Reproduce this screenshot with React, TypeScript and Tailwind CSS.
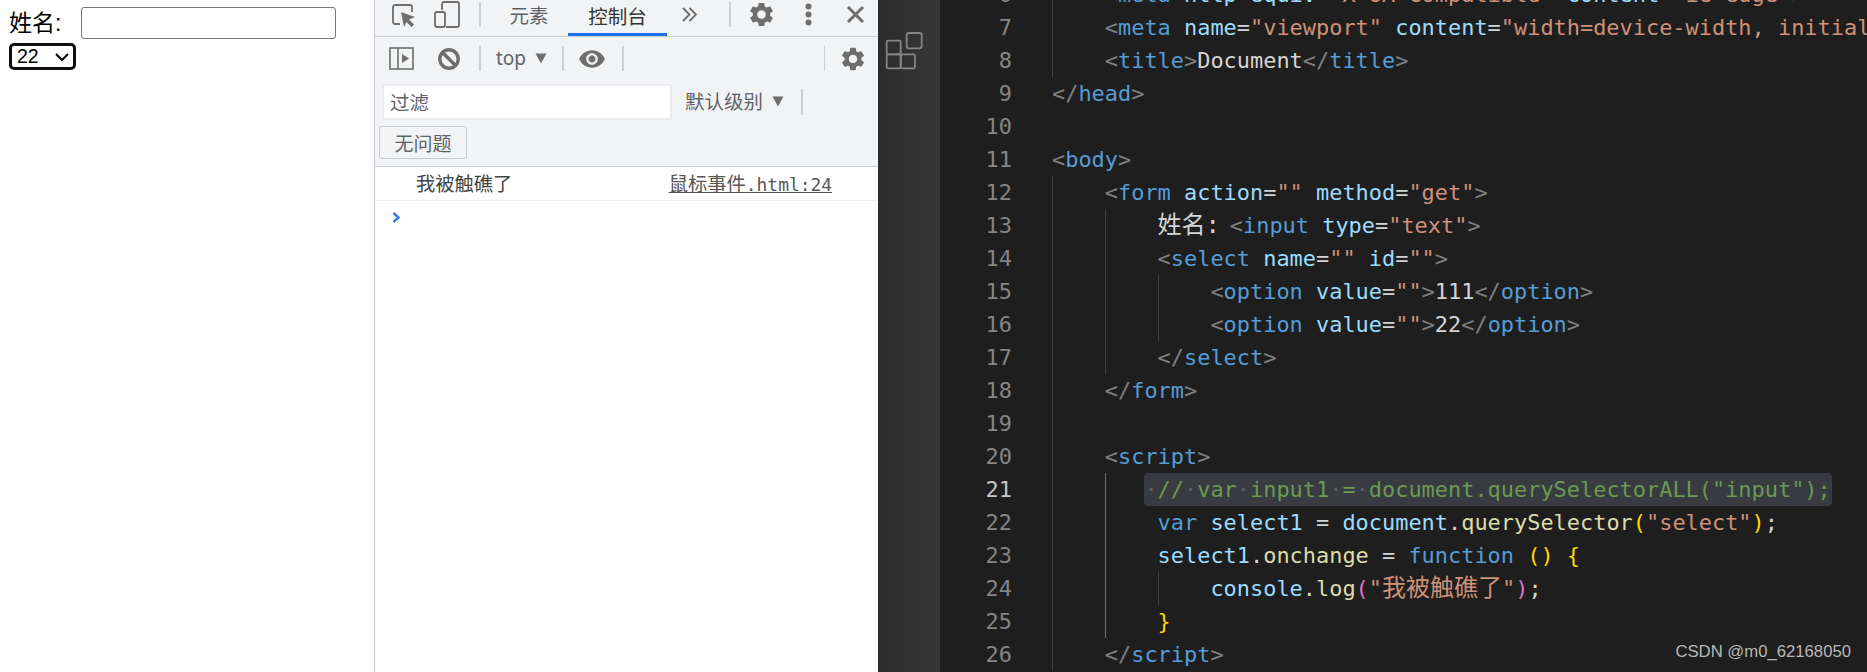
import React from "react";
import { MdSettings, MdVisibility } from "react-icons/md";

const UI = "font-['Noto_Sans','Noto_Sans_CJK_SC',sans-serif]";
const MONO = "font-['DejaVu_Sans_Mono','Noto_Sans_CJK_SC',monospace]";

// token colours
const P = "text-[#808080]";
const T = "text-[#569cd6]";
const A = "text-[#9cdcfe]";
const S = "text-[#ce9178]";
const W = "text-[#d4d4d4]";
const F = "text-[#dcdcaa]";
const G = "text-[#ffd700]";
const M = "text-[#da70d6]";
const C = "text-[#6a9955]";
const D = "text-[#5c6066]";

type Tok = [string, string];
type Row = { n: number; indent: number; toks?: Tok[]; hl?: boolean };

const open = (tag: string): Tok[] => [[P, "<"], [T, tag]];
const close = (tag: string): Tok[] => [[P, "</"], [T, tag], [P, ">"]];
const attr = (name: string, val: string): Tok[] => [[W, " "], [A, name], [W, "="], [S, `"${val}"`]];

const rows: Row[] = [
  { n: 6, indent: 1, toks: [...open("meta"), ...attr("http-equiv", "X-UA-Compatible"), ...attr("content", "ie=edge"), [P, ">"]] },
  { n: 7, indent: 1, toks: [...open("meta"), ...attr("name", "viewport"), ...attr("content", "width=device-width, initial-scale=1.0"), [P, ">"]] },
  { n: 8, indent: 1, toks: [...open("title"), [P, ">"], [W, "Document"], ...close("title")] },
  { n: 9, indent: 0, toks: close("head") },
  { n: 10, indent: 0 },
  { n: 11, indent: 0, toks: [...open("body"), [P, ">"]] },
  { n: 12, indent: 1, toks: [...open("form"), ...attr("action", ""), ...attr("method", "get"), [P, ">"]] },
  { n: 13, indent: 2, toks: [["cjk", "姓名:"], [W, " "], ...open("input"), ...attr("type", "text"), [P, ">"]] },
  { n: 14, indent: 2, toks: [...open("select"), ...attr("name", ""), ...attr("id", ""), [P, ">"]] },
  { n: 15, indent: 3, toks: [...open("option"), ...attr("value", ""), [P, ">"], [W, "111"], ...close("option")] },
  { n: 16, indent: 3, toks: [...open("option"), ...attr("value", ""), [P, ">"], [W, "22"], ...close("option")] },
  { n: 17, indent: 2, toks: close("select") },
  { n: 18, indent: 1, toks: close("form") },
  { n: 19, indent: 1 },
  { n: 20, indent: 1, toks: [...open("script"), [P, ">"]] },
  {
    n: 21,
    indent: 2,
    hl: true,
    toks: [
      [D, "·"], [C, "//"], [D, "·"], [C, "var"], [D, "·"], [C, "input1"], [D, "·"], [C, "="], [D, "·"],
      [C, 'document.querySelectorALL("input");'],
    ],
  },
  {
    n: 22,
    indent: 2,
    toks: [
      [T, "var"], [W, " "], [A, "select1"], [W, " = "], [A, "document"], [W, "."], [F, "querySelector"],
      [G, "("], [S, '"select"'], [G, ")"], [W, ";"],
    ],
  },
  {
    n: 23,
    indent: 2,
    toks: [[A, "select1"], [W, "."], [F, "onchange"], [W, " = "], [T, "function"], [W, " "], [G, "()"], [W, " "], [G, "{"]],
  },
  {
    n: 24,
    indent: 3,
    toks: [
      [A, "console"], [W, "."], [F, "log"], [M, "("], [S, '"'], [S, "我被触礁了"], [S, '"'], [M, ")"], [W, ";"],
    ],
  },
  { n: 25, indent: 2, toks: [[G, "}"]] },
  { n: 26, indent: 1, toks: close("script") },
];

const hasCjk = (s: string) => /[\u4e00-\u9fff]/.test(s);

function CodeRow({ row }: { row: Row }) {
  return (
    <div className="flex h-[33px] items-center leading-[33px] whitespace-pre">
      <div className={`w-[72px] shrink-0 text-right ${row.n === 21 ? "text-[#c6c6c6]" : "text-[#858585]"}`}>{row.n}</div>
      <div className="w-[40px] shrink-0" />
      {Array.from({ length: row.indent }).map((_, i) => (
        <div
          key={i}
          className={`h-full shrink-0 border-l ${row.hl && i === 1 ? "w-[39.6px]" : "w-[52.8px]"} ${
            row.n >= 21 && row.n <= 25 && i === 1 ? "border-[#707070]" : "border-[#404040]"
          }`}
        />
      ))}
      <div className={row.hl ? "flex h-full items-center rounded-[4px] bg-[#383b3f] pr-px" : "flex h-full items-center"}>
        {row.toks?.map(([cls, text], i) =>
          cls === "cjk" ? (
            <span key={i} className={`${W} inline-block w-[59px] text-[24px]`}>
              {text}
            </span>
          ) : (
            <span key={i} className={`${cls} ${hasCjk(text) ? "text-[24px]" : ""}`}>
              {text}
            </span>
          ),
        )}
      </div>
    </div>
  );
}

const Divider = ({ className = "" }: { className?: string }) => (
  <div className={`w-[2px] shrink-0 bg-[#cdd0d4] ${className}`} />
);

const Caret = ({ className = "" }: { className?: string }) => (
  <svg width="12" height="11" viewBox="0 0 12 11" className={`shrink-0 ${className}`}>
    <path d="M0.5 0.5h11L6 10.5z" fill="#6e6e6e" />
  </svg>
);

function DevTools() {
  return (
    <div className={`flex w-[503px] shrink-0 flex-col bg-white ${UI}`}>
      <div className="flex h-[37px] items-stretch border-b border-[#cacdd1] bg-[#f1f3f4]">
        <svg width="24" height="24" viewBox="0 0 24 24" fill="none" className="mt-[3px] ml-[16px] shrink-0">
          <path d="M9 21H4a2 2 0 0 1-2-2V4a2 2 0 0 1 2-2h15a2 2 0 0 1 2 2v5" stroke="#6e6e6e" strokeWidth="1.8" />
          <path d="M10 9l14 5-6 2.5 5 5-2.5 2.5-5-5L13 24z" fill="#6e6e6e" />
        </svg>
        <svg width="26" height="27" viewBox="0 0 26 27" fill="none" className="mt-px ml-[19px] shrink-0">
          <path d="M8 9V3a2 2 0 0 1 2-2h13a2 2 0 0 1 2 2v21a2 2 0 0 1-2 2H12" stroke="#6e6e6e" strokeWidth="1.8" />
          <rect x="1" y="11" width="10" height="15" rx="2" stroke="#6e6e6e" strokeWidth="1.8" />
        </svg>
        <Divider className="mt-[2px] ml-[19px] h-[25px]" />
        <div className="flex w-[87px] items-center justify-center pb-[5px] pl-[9px] text-[19.5px] text-[#5f6368]">元素</div>
        <div className="flex w-[99px] items-center justify-center border-b-[3px] border-[#1a73e8] text-[19.5px] text-[#333333]">控制台</div>
        <svg width="17" height="15" viewBox="0 0 17 15" fill="none" className="mt-[7px] ml-[14px] shrink-0">
          <path d="M2 1l6.5 6.5L2 14M8.5 1L15 7.5 8.5 14" stroke="#6e6e6e" strokeWidth="1.8" />
        </svg>
        <Divider className="mt-[2px] ml-[31px] h-[25px]" />
        <MdSettings className="ml-[16px] shrink-0 text-[#6e6e6e]" size={29} />
        <svg width="29" height="29" viewBox="0 0 29 29" className="ml-[18px] shrink-0">
          <circle cx="14.5" cy="6.5" r="3" fill="#6e6e6e" />
          <circle cx="14.5" cy="14.5" r="3" fill="#6e6e6e" />
          <circle cx="14.5" cy="22.5" r="3" fill="#6e6e6e" />
        </svg>
        <svg width="29" height="29" viewBox="0 0 29 29" fill="none" className="ml-[18px] shrink-0">
          <path d="M7 7l15 15M22 7L7 22" stroke="#6e6e6e" strokeWidth="3" />
        </svg>
      </div>
      <div className="flex h-[37px] items-center bg-[#f1f3f4] pt-[6px]">
        <svg width="25" height="23" viewBox="0 0 25 23" fill="none" className="ml-[14px] shrink-0">
          <rect x="1" y="1" width="23" height="21" stroke="#6e6e6e" strokeWidth="1.6" />
          <path d="M9 1v21" stroke="#6e6e6e" strokeWidth="1.6" />
          <path d="M13 7l7 4.5-7 4.5z" fill="#6e6e6e" />
        </svg>
        <svg width="24" height="24" viewBox="0 0 24 24" fill="none" className="ml-[23px] shrink-0">
          <circle cx="12" cy="12" r="9.2" stroke="#6e6e6e" strokeWidth="3.4" />
          <path d="M5.5 5.5l13 13" stroke="#6e6e6e" strokeWidth="3.4" />
        </svg>
        <Divider className="ml-[18px] h-[25px]" />
        <span className="ml-[15px] text-[19px] text-[#5f6368]">top</span>
        <Caret className="ml-[9px]" />
        <Divider className="ml-[15px] h-[25px]" />
        <MdVisibility className="ml-[14px] shrink-0 text-[#6e6e6e]" size={28} />
        <Divider className="ml-[16px] h-[25px]" />
        <Divider className="ml-[200px] h-[25px] w-px" />
        <MdSettings className="ml-[14px] shrink-0 text-[#6e6e6e]" size={28} />
      </div>
      <div className="flex h-[52px] items-center bg-[#f1f3f4] pt-[3px]">
        <div className="ml-[7px] flex h-[36px] w-[290px] items-center border-2 border-[#e9ebee] bg-white pt-[3px] pl-[6px] text-[19.5px] text-[#5f6368]">过滤</div>
        <span className="ml-[13px] text-[19.5px] text-[#5f6368]">默认级别</span>
        <Caret className="ml-[9px]" />
        <Divider className="ml-[17px] h-[26px]" />
      </div>
      <div className="flex h-[41px] items-start border-b border-[#cacdd1] bg-[#f1f3f4] pl-[4px]">
        <div className="flex h-[33px] w-[88px] items-center justify-center rounded-[3px] border border-[#c8cbcf] pt-[3px] text-[19px] text-[#5f6368]">无问题</div>
      </div>
      <div className="flex h-[34px] items-center justify-between border-b border-[#f0f0f0] pt-[2px] pr-[46px] pl-[41px] text-[19.3px] text-[#444444]">
        <span>我被触礁了</span>
        <span className="text-[#555555] underline">
          鼠标事件<span className="font-['DejaVu_Sans_Mono',monospace] text-[17.9px]">.html:24</span>
        </span>
      </div>
      <svg width="9" height="11" viewBox="0 0 9 11" fill="none" className="mt-[11px] ml-[17px]">
        <path d="M1.5 1l5 4.5-5 4.5" stroke="#2f7bf0" strokeWidth="2.4" />
      </svg>
    </div>
  );
}

export default function App() {
  return (
    <div className="relative flex h-[672px] w-[1867px] overflow-hidden bg-white">
      <form className="flex w-[375px] shrink-0 flex-col items-start border-r border-[#c8cbcf] pl-[9px] font-['Liberation_Sans','Noto_Sans_CJK_SC',sans-serif] text-black">
        <div className="mt-[7px] flex h-[32px] items-center">
          <span className="w-[72px] text-[23px]">姓名:</span>
          <input type="text" className="h-[32px] w-[255px] rounded-[3px] border border-[#767676] bg-white" />
        </div>
        <div className="relative mt-[4px]">
          <select
            defaultValue="22"
            className="block h-[27px] w-[67px] appearance-none rounded-[5px] border-[3px] border-[#111111] bg-white pl-[5px] text-[19.5px] leading-none text-black"
          >
            <option value="111">111</option>
            <option value="22">22</option>
          </select>
          <svg width="14" height="9" viewBox="0 0 14 9" fill="none" className="absolute top-[10px] left-[46px]">
            <path d="M1 1l6 6 6-6" stroke="#000000" strokeWidth="2" />
          </svg>
        </div>
      </form>
      <DevTools />
      <div className="w-[62px] shrink-0 bg-linear-to-r from-[#2c2c2c] to-[#373737] pt-[32px] pl-[7px]">
        <svg width="38" height="38" viewBox="0 0 38 38" fill="none" stroke="#858585" strokeWidth="1.8">
          <rect x="1.7" y="8.7" width="14" height="13.6" rx="1.5" />
          <rect x="1.7" y="22.3" width="14" height="14" rx="1.5" />
          <rect x="15.7" y="22.3" width="14.3" height="14" rx="1.5" />
          <rect x="21.7" y="1" width="15" height="15.3" rx="2" />
        </svg>
      </div>
      <div className={`min-w-0 flex-1 overflow-hidden bg-[#1e1e1e] text-[21.93px] ${MONO}`}>
        <div className="-mt-[22px]">
          {rows.map((row) => (
            <CodeRow key={row.n} row={row} />
          ))}
        </div>
      </div>
      <div className="absolute right-[16px] bottom-[8px] font-['Liberation_Sans',sans-serif] text-[16.7px] text-[#b8b8b8]">CSDN @m0_62168050</div>
    </div>
  );
}
